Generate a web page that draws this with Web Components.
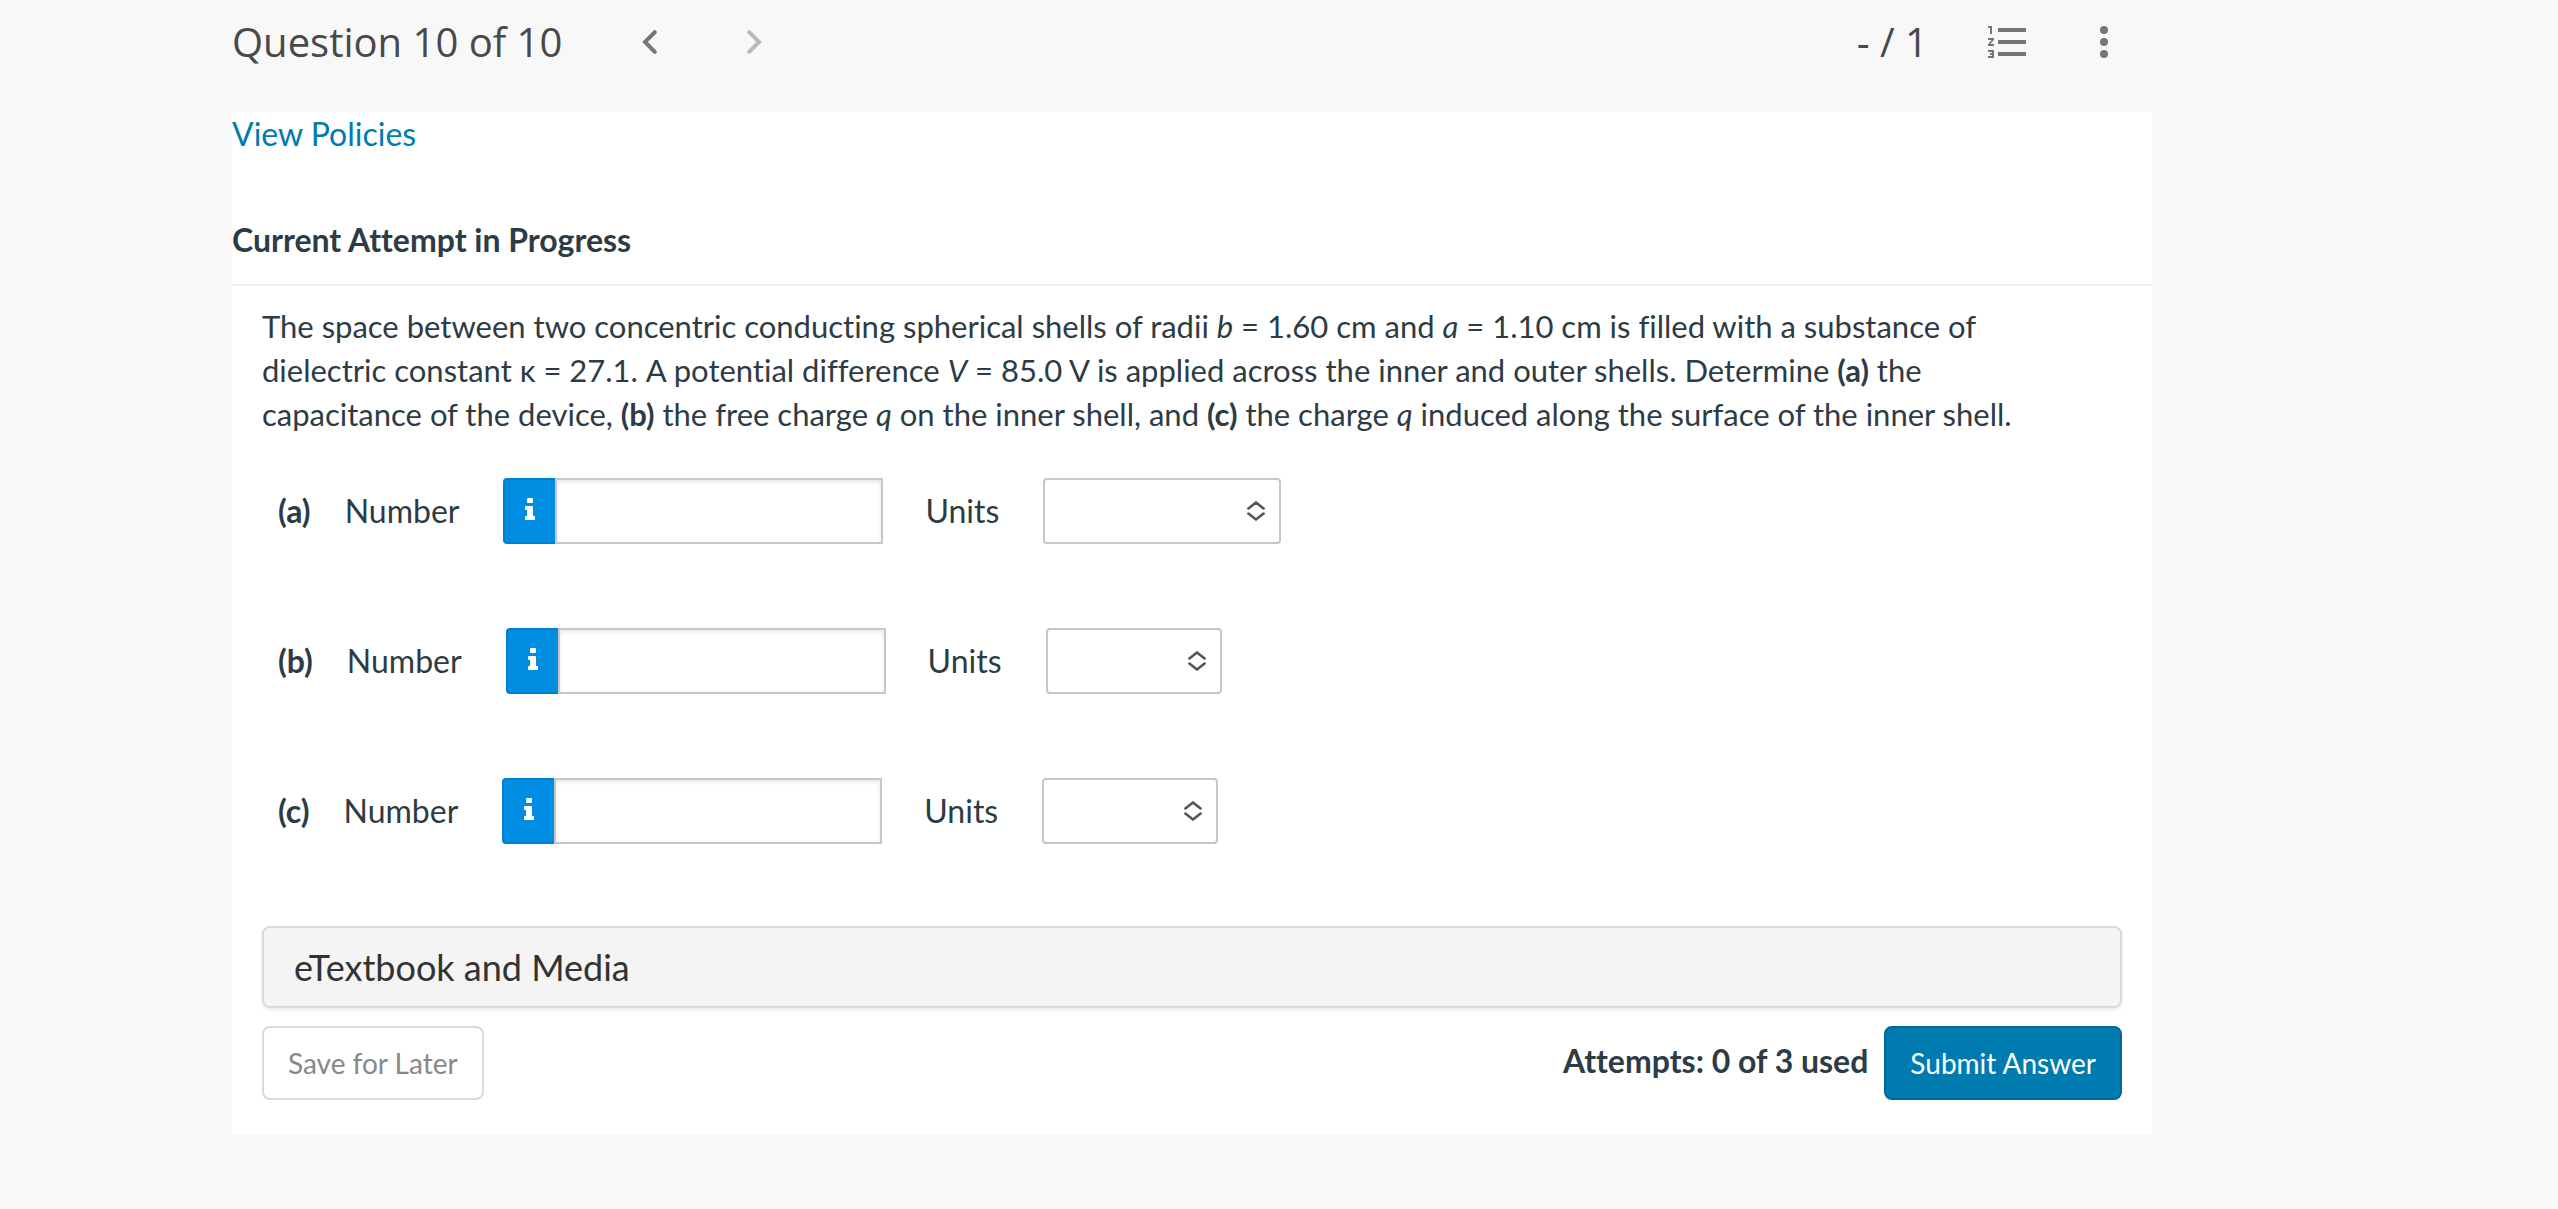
<!DOCTYPE html>
<html lang="en">
<head>
<meta charset="utf-8">
<title>Question 10 of 10</title>
<style>
  html { background: #fafafa; }
  body {
    margin: 0;
    color: #2d3b45;
    font: 32px/44px Lato, "Liberation Sans", sans-serif;
    font-variant-ligatures: none;
    --gutter-start: 232px;
    --gutter-end: 406px;
  }
</style>
</head>
<body>
<assessment-page></assessment-page>

<script>
class BaseElement extends HTMLElement {
  constructor() {
    super();
    const tpl = document.createElement('template');
    tpl.innerHTML = '<style>*{box-sizing:border-box}</style>' + this.render();
    this.attachShadow({ mode: 'open' }).append(tpl.content.cloneNode(true));
  }
}

class QuestionBar extends BaseElement {
  render() {
    return `
    <style>
      :host { display: block; background: #f8f8f8; padding: 0 var(--gutter-end) 28px var(--gutter-start); color: #494949; font: 40px/84px "Open Sans", sans-serif; }
      header { display: flex; align-items: center; padding-right: 24px; }
      h1 { font: inherit; margin: 0; }
      nav, .tools { display: flex; align-items: center; }
      nav { gap: 56px; margin-left: 64px; }
      nav svg { fill: none; stroke: currentColor; stroke-width: 2; stroke-linecap: round; }
      .tools { gap: 48px; margin-left: auto; }
      .score { margin-right: 8px; }
      button { display: block; border: 0; padding: 0; background: none; color: #757575; cursor: pointer; }
      button:disabled { color: #b9b9b9; }
      svg { display: block; width: 48px; height: 48px; fill: currentColor; }
    </style>
    <header>
      <h1>Question 10 of 10</h1>
      <nav aria-label="Questions">
        <button aria-label="Previous question"><svg viewBox="0 0 24 24"><path d="M14.4 7.1 9.5 12l4.9 4.9"/></svg></button>
        <button aria-label="Next question" disabled><svg viewBox="0 0 24 24"><path d="M9.6 7.1 14.5 12l-4.9 4.9"/></svg></button>
      </nav>
      <div class="tools">
        <span class="score">- / 1</span>
        <button aria-label="Question list"><svg viewBox="0 0 24 24"><path d="M2 17h2v.5H3v1h1v.5H2v1h3v-4H2zm1-9h1V4H2v1h1zm-1 3h1.8L2 13.1v.9h3v-1H3.2L5 10.9V10H2zm5-6v2h14V5zm0 14h14v-2H7zm0-6h14v-2H7z"/></svg></button>
        <button aria-label="More options"><svg viewBox="0 0 24 24"><path d="M12 8a2 2 0 1 0 0-4 2 2 0 0 0 0 4m0 2a2 2 0 1 0 0 4 2 2 0 0 0 0-4m0 6a2 2 0 1 0 0 4 2 2 0 0 0 0-4"/></svg></button>
      </div>
    </header>`;
  }
}

class NumberField extends BaseElement {
  render() {
    return `
    <style>
      :host { display: flex; align-items: center; gap: 44px; }
      .group { display: flex; height: 66px; }
      button { display: grid; place-items: center; width: 52px; padding: 0 0 4px; background: #008ee2; border: 2px solid #0081cd; border-right: 0; border-radius: 4px 0 0 4px; color: #fff; cursor: pointer; }
      svg { display: block; width: 10px; height: 22px; fill: currentColor; }
      input { width: 328px; padding: 0 12px; border: 2px solid #c7c7c7; border-radius: 0; background: #fff; box-shadow: inset 0 2px 4px rgba(0, 0, 0, .1); font: inherit; color: inherit; }
    </style>
    <label for="value">Number</label>
    <div class="group">
      <button aria-label="Number format help"><svg viewBox="0 0 10 22"><path d="M3 0h4q1 0 1 1v3q0 1-1 1H3q-1 0-1-1V1q0-1 1-1M1 8h6q1 0 1 1v9h1q1 0 1 1v2q0 1-1 1H1q-1 0-1-1v-2q0-1 1-1h1v-6H1q-1 0-1-1V9q0-1 1-1"/></svg></button>
      <input id="value" type="text">
    </div>`;
  }
}

class UnitSelect extends BaseElement {
  render() {
    return `
    <style>
      :host { display: flex; align-items: center; gap: 44px; }
      .box { display: grid; align-items: center; justify-items: end; width: 176px; }
      :host([wide]) .box { width: 238px; }
      select, svg { grid-area: 1 / 1; }
      select { appearance: none; width: 100%; height: 66px; padding: 0 48px 0 16px; border: 2px solid #c7c7c7; border-radius: 4px; background: #fff; font: inherit; color: inherit; }
      svg { width: 18px; height: 20px; margin-right: 16px; fill: none; stroke: #555; stroke-width: 2.6; stroke-linecap: round; stroke-linejoin: round; pointer-events: none; }
    </style>
    <label for="unit">Units</label>
    <div class="box">
      <select id="unit"><option></option></select>
      <svg viewBox="0 0 18 20"><path d="M1.4 7.4 9 1.4l7.6 6M1.4 12.6l7.6 6 7.6-6"/></svg>
    </div>`;
  }
}

class AnswerRow extends BaseElement {
  render() {
    return `
    <style>
      :host { display: flex; align-items: center; gap: 42px; }
      .part { display: flex; align-items: center; gap: 34px; }
    </style>
    <div class="part"><b><slot></slot></b><number-field></number-field></div>
    <slot name="unit"></slot>`;
  }
}

class MediaPanel extends BaseElement {
  render() {
    return `
    <style>
      :host { display: block; }
      button { display: block; width: 100%; height: 82px; padding: 0 30px; border: 2px solid #dadada; border-radius: 8px; background: #f4f4f4; box-shadow: 0 2px 4px rgba(0, 0, 0, .08); font: 36px/44px Lato, sans-serif; font-variant-ligatures: none; color: #333; text-align: left; cursor: pointer; }
    </style>
    <button aria-expanded="false"><slot></slot></button>`;
  }
}

class ActionButton extends BaseElement {
  render() {
    return `
    <style>
      :host { display: block; }
      button { display: block; height: 74px; padding: 0 24px; border: 2px solid #dadada; border-radius: 8px; background: #fff; font: 28px/40px Lato, sans-serif; color: #888; cursor: pointer; }
      :host([primary]) button { background: #007bb0; border-color: #006899; color: #fff; }
    </style>
    <button><slot></slot></button>`;
  }
}

class QuestionCard extends BaseElement {
  render() {
    return `
    <style>
      :host { display: block; margin: 0 var(--gutter-end) 0 var(--gutter-start); background: #fff; }
      a { display: inline-block; vertical-align: top; color: #007bb0; text-decoration: none; }
      h2 { margin: 0; padding: 62px 0 22px; border-bottom: 2px solid #eee; font-size: 32px; line-height: 44px; font-weight: 700; }
      .body { padding: 18px 30px 34px; }
      p { margin: 0; padding-right: 44px; font-size: 31px; }
      .rows { display: flex; flex-direction: column; gap: 84px; padding: 42px 16px 82px; }
      footer { display: flex; align-items: center; justify-content: space-between; padding-top: 18px; }
      .submit { display: flex; align-items: center; gap: 16px; }
      .submit b { padding-bottom: 4px; }
    </style>
    <a href="#">View Policies</a>
    <h2>Current Attempt in Progress</h2>
    <div class="body">
      <p>The space between two concentric conducting spherical shells of radii <i>b</i> = 1.60 cm and <i>a</i> = 1.10 cm is filled with a substance of dielectric constant κ = 27.1. A potential difference <i>V</i> = 85.0 V is applied across the inner and outer shells. Determine <b>(a)</b> the capacitance of the device, <b>(b)</b> the free charge <i>q</i> on the inner shell, and <b>(c)</b> the charge <i>q</i> induced along the surface of the inner shell.</p>
      <div class="rows">
        <answer-row>(a)<unit-select slot="unit" wide></unit-select></answer-row>
        <answer-row>(b)<unit-select slot="unit"></unit-select></answer-row>
        <answer-row>(c)<unit-select slot="unit"></unit-select></answer-row>
      </div>
      <media-panel>eTextbook and Media</media-panel>
      <footer>
        <action-button>Save for Later</action-button>
        <div class="submit"><b>Attempts: 0 of 3 used</b><action-button primary>Submit Answer</action-button></div>
      </footer>
    </div>`;
  }
}

class AssessmentPage extends BaseElement {
  render() {
    return `
    <style>:host { display: block; }</style>
    <question-bar></question-bar>
    <main><question-card></question-card></main>`;
  }
}

customElements.define('question-bar', QuestionBar);
customElements.define('number-field', NumberField);
customElements.define('unit-select', UnitSelect);
customElements.define('answer-row', AnswerRow);
customElements.define('media-panel', MediaPanel);
customElements.define('action-button', ActionButton);
customElements.define('question-card', QuestionCard);
customElements.define('assessment-page', AssessmentPage);
</script>
</body>
</html>
